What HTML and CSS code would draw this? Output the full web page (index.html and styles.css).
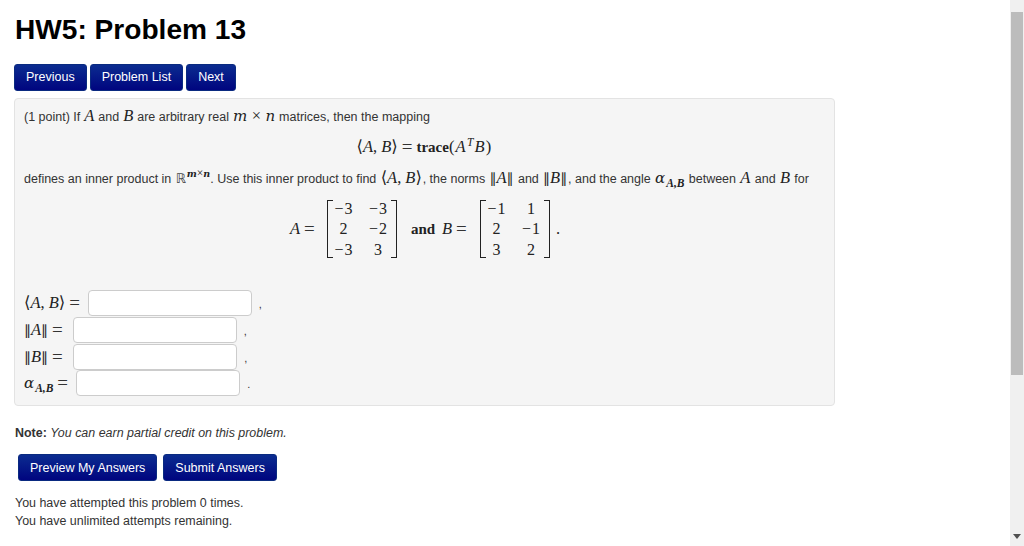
FILE: index.html
```html
<!DOCTYPE html>
<html lang="en">
<head>
<meta charset="utf-8">
<title>HW5: Problem 13</title>
<link rel="stylesheet" href="styles.css">
</head>
<body>
<main class="page">
  <h1 class="title">HW5: Problem 13</h1>
  <nav class="nav">
    <a class="btn nav-btn">Previous</a>
    <a class="btn nav-btn">Problem List</a>
    <a class="btn nav-btn">Next</a>
  </nav>
  <section class="panel">
    <p class="line">(1 point) If <i class="m">A</i> and <i class="m">B</i> are arbitrary real <i class="m wide">m</i> <span class="m op">×</span> <i class="m wide">n</i> matrices, then the mapping</p>
    <div class="display"><span class="m">⟨<i>A</i>,<i class="sp">B</i>⟩<span class="eq">=</span><span class="rm">trace</span><span class="tail">(<i>A</i><sup class="up"><i>T</i></sup><i>B</i>)</span></span></div>
    <p class="line loose">defines an inner product in <span class="m bb">ℝ</span><sup class="up"><i class="wide">m</i>×<i class="wide">n</i></sup>. Use this inner product to find <span class="m">⟨<i>A</i>,<i class="sp">B</i>⟩</span>, the norms <span class="m"><span class="nb">∥</span><i>A</i><span class="nb">∥</span></span> and <span class="m"><span class="nb">∥</span><i>B</i><span class="nb">∥</span></span>, and the angle <span class="m"><i class="wide">α</i><sub class="low"><i>A,B</i></sub></span> between <i class="m">A</i> and <i class="m">B</i> for</p>
    <div class="matrices m">
      <span class="lhs a-lhs"><i>A</i><span class="eq">=</span></span>
      <div class="matrix">
        <span>−3</span><span>−3</span>
        <span>2</span><span>−2</span>
        <span>−3</span><span>3</span>
      </div>
      <span class="rm and">and</span>
      <span class="lhs b-lhs"><i>B</i><span class="eq">=</span></span>
      <div class="matrix">
        <span>−1</span><span>1</span>
        <span>2</span><span>−1</span>
        <span>3</span><span>2</span>
      </div>
      <span class="dot">.</span>
    </div>
    <div class="answers">
      <div class="answer"><span class="m label l1">⟨<i>A</i>,<i class="sp">B</i>⟩<span class="eq">=</span></span><input class="field" type="text" aria-label="inner product"><span class="punct">,</span></div>
      <div class="answer"><span class="m label l2"><span class="nb">∥</span><i>A</i><span class="nb">∥</span><span class="eq">=</span></span><input class="field" type="text" aria-label="norm of A"><span class="punct">,</span></div>
      <div class="answer"><span class="m label l3"><span class="nb">∥</span><i>B</i><span class="nb">∥</span><span class="eq">=</span></span><input class="field" type="text" aria-label="norm of B"><span class="punct">,</span></div>
      <div class="answer"><span class="m label l4"><i class="wide">α</i><sub class="low"><i>A,B</i></sub><span class="eq">=</span></span><input class="field" type="text" aria-label="angle"><span class="punct">.</span></div>
    </div>
  </section>
  <p class="note"><b>Note:</b> <em>You can earn partial credit on this problem.</em></p>
  <div class="actions">
    <button class="btn action-btn" type="button">Preview My Answers</button>
    <button class="btn action-btn" type="button">Submit Answers</button>
  </div>
  <p class="status">You have attempted this problem 0 times.<br>You have unlimited attempts remaining.</p>
</main>
<aside class="scrollbar" aria-hidden="true">
  <div class="thumb"></div>
  <svg class="arrow" width="8" height="5" viewBox="0 0 8 5"><path d="M0 0H8L4 5Z" fill="#505050"/></svg>
</aside>
</body>
</html>
```
FILE: styles.css
```css
* { box-sizing: border-box; }
html, body { margin: 0; height: 546px; overflow: hidden; }
body {
  display: flex;
  background: #fff;
  color: #333;
  font-family: "Liberation Sans", Arial, sans-serif;
  font-size: 12.45px;
}
.page { flex: 1; min-width: 0; padding: 14px 0 0 14px; }
.title {
  margin: 0 0 0 1px;
  font-size: 28.1px;
  line-height: 32px;
  font-weight: 700;
  color: #000;
}
.nav { display: flex; gap: 3px; margin-top: 18px; }
.btn {
  display: block;
  border: 1px solid #0a2a80;
  border-radius: 3px;
  background: linear-gradient(#0b2c90, #00057f);
  color: #fff;
  font-family: inherit;
  font-size: 12.5px;
  text-align: center;
}
.nav-btn { height: 27px; line-height: 25px; padding: 0 11px; }
.panel {
  width: 821px;
  height: 308px;
  margin-top: 7px;
  padding: 7px 9px 0;
  background: #f5f5f5;
  border: 1px solid #e3e3e3;
  border-radius: 4px;
}
.line { margin: 0; height: 20px; line-height: 20px; white-space: nowrap; font-size: 12.5px; }
.m { font-family: "Liberation Serif", "DejaVu Serif", serif; font-size: 16.5px; color: #222; }
.line .m { margin: 0 0.5px; }
.line.loose .m { margin: 0 0.85px; }
.wide { font-family: "DejaVu Serif", serif; font-size: 15px; }
.bb { font-family: "DejaVu Sans", sans-serif; font-size: 13px; font-weight: 400; color: #444; }
.op { margin: 0 1px; }
.sp { margin-left: 4px; }
.eq { margin: 0 4px; font-size: 19px; line-height: 0; vertical-align: -1px; font-weight: 400; color: #333; }
.nb { font-family: "DejaVu Sans", sans-serif; font-size: 14px; }
.rm { font-weight: 700; font-size: 15px; }
.tail { letter-spacing: 1.2px; }
.up { font-size: 11.5px; line-height: 0; vertical-align: 6px; font-family: "Liberation Serif", serif; color: #222; }
.up .wide { font-size: 9.5px; font-weight: 700; }
.low { font-size: 11.5px; line-height: 0; vertical-align: -4px; margin-left: 1px; font-weight: 700; }
.display { height: 42px; line-height: 42px; text-align: center; }
.matrices {
  display: flex;
  align-items: center;
  height: 64px;
  margin-top: 9px;
  padding-left: 266px;
}
.lhs { white-space: nowrap; }
.a-lhs { width: 37px; }
.b-lhs { width: 38px; }
.matrix {
  position: relative;
  display: grid;
  grid-template-columns: 34px 35px;
  grid-template-rows: repeat(3, 20.5px);
  align-content: center;
  align-items: center;
  justify-items: center;
  height: 58px;
  width: 70px;
  font-size: 16px;
  line-height: 20px;
  letter-spacing: 1px;
}
.matrix::before, .matrix::after {
  content: "";
  position: absolute;
  top: 0;
  bottom: 0;
  width: 5px;
  border: 1.5px solid #222;
}
.matrix::before { left: 0; border-right: 0; }
.matrix::after { right: 0; border-left: 0; }
.and { margin-left: 14px; width: 31px; }
.dot { margin-left: 6px; }
.answers { margin-top: 29px; display: flex; flex-direction: column; gap: 0.75px; }
.answer { display: flex; height: 26px; align-items: center; }
.label { white-space: nowrap; }
.l1 { width: 63.7px; }
.l2 { width: 48.7px; }
.l3 { width: 49.3px; }
.l4 { width: 52.3px; }
.field {
  width: 164px;
  height: 26px;
  background: #fff;
  border: 1px solid #ccc;
  border-radius: 4px;
  padding: 0;
}
.punct { margin-left: 7px; font-size: 11px; padding-top: 2px; }
.note { margin: 19px 0 0 1px; line-height: 16px; color: #333; }
.actions { display: flex; gap: 6px; margin: 13px 0 0 4px; }
.action-btn { height: 27px; padding: 0 11px; }
.status { margin: 13px 0 0 1px; line-height: 18px; color: #333; }
.scrollbar {
  position: relative;
  flex: 0 0 14px;
  background: #f0f0f0;
  padding: 12px 1px 0;
}
.thumb { height: 363px; background: #bcbcbc; }
.arrow { position: absolute; left: 3px; bottom: 7px; }
```
